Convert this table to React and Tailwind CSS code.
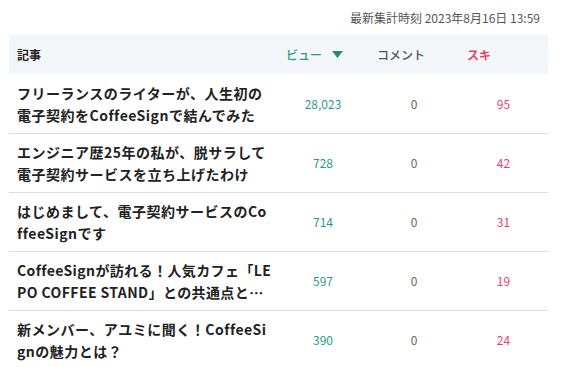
import React from "react";

const rows = [
  { t: "フリーランスのライターが、人生初の電子契約をCoffeeSignで結んでみた", v: "28,023", c: "0", s: "95" },
  { t: "エンジニア歴25年の私が、脱サラして電子契約サービスを立ち上げたわけ", v: "728", c: "0", s: "42" },
  { t: "はじめまして、電子契約サービスのCoffeeSignです", v: "714", c: "0", s: "31" },
  { lines: ["CoffeeSignが訪れる！人気カフェ「LE", "PO COFFEE STAND」との共通点と…"], v: "597", c: "0", s: "19" },
  { t: "新メンバー、アユミに聞く！CoffeeSignの魅力とは？", v: "390", c: "0", s: "24" },
];

export default function App() {
  return (
    <div className="w-[571px] h-[367px] overflow-hidden bg-white pl-[9px] pr-[23px]" style={{ fontFamily: '"Noto Sans CJK JP", "Noto Sans", sans-serif' }}>
      <div className="h-[35px] flex items-center justify-end pr-[8px] text-[12px] text-[#555]">
        最新集計時刻 2023年8月16日 13:59
      </div>
      <div className="grid grid-cols-[268px_92px_90px_89px] h-[39px] items-center bg-[#f4f7fa] text-[12px]">
        <div className="pl-[8px] font-bold text-[#222]">記事</div>
        <div className="pl-[9px] text-[#2a9a85] font-medium flex items-center gap-[10px]">
          ビュー
          <svg width="11" height="7" viewBox="0 0 11 7"><path d="M0 0H11L5.5 7Z" fill="#2a8a76" /></svg>
        </div>
        <div className="pl-[8px] text-[#555] font-medium">コメント</div>
        <div className="pl-[8px] text-[#f0406a] font-bold">スキ</div>
      </div>
      {rows.map((r, i) => (
        <div key={i} className={"grid grid-cols-[268px_92px_90px_89px] items-center h-[59px] " + (i > 0 ? "border-t border-[#dedede]" : "")}>
          {r.lines ? (
            <div className="pl-[8px] text-[14px] leading-[22px] font-bold text-[#222] tracking-[0.4px] whitespace-nowrap">
              <div>{r.lines[0]}</div>
              <div>{r.lines[1]}</div>
            </div>
          ) : (
            <div className="pl-[8px] pr-[8px] text-[14px] leading-[22px] font-bold text-[#222] tracking-[0.5px] break-all line-clamp-2">
              {r.t}
            </div>
          )}
          <div className="text-center text-[12px] text-[#2a9a85]">{r.v}</div>
          <div className="text-center text-[12px] text-[#666]">{r.c}</div>
          <div className="text-center text-[12px] text-[#f0406a]">{r.s}</div>
        </div>
      ))}
    </div>
  );
}
